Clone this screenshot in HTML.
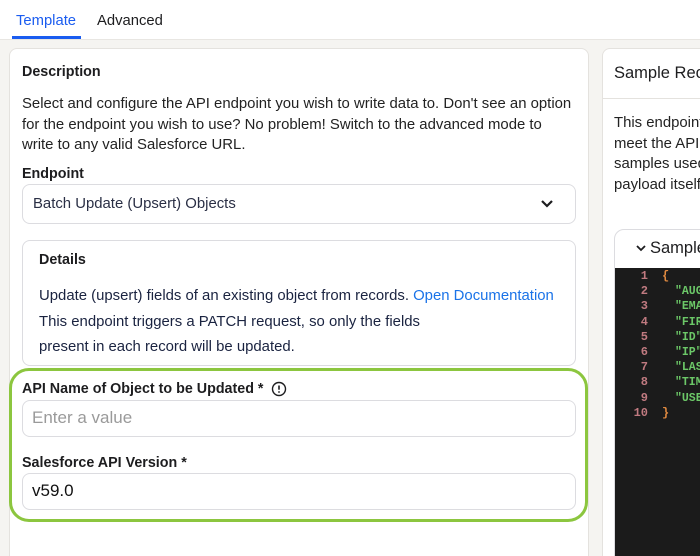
<!DOCTYPE html>
<html><head><style>
*{box-sizing:border-box;margin:0;padding:0}
html,body{width:700px;height:556px;overflow:hidden}
body{background:#f5f4f1;font-family:"Liberation Sans",sans-serif;color:#1d1d1f;position:relative}
.a{position:absolute;white-space:nowrap}
.tabs{position:absolute;left:0;top:0;width:700px;height:40px;background:#fff;border-bottom:1px solid #e8e6e2}
.card{position:absolute;background:#fff;border:1px solid #e4e2de;border-radius:8px}
.box{position:absolute;border:1px solid #dcdce0;border-radius:8px;background:#fff}
.t14{font-size:14.9px}
.b{font-weight:bold;font-size:14.3px}
#r{position:absolute;left:602px;top:48px;width:98px;height:508px;overflow:hidden}
</style></head><body>
<div class="tabs">
 <div class="a" style="left:16px;top:13px;font-size:14.8px;color:#1a5cf0">Template</div>
 <div class="a" style="left:12px;top:36px;width:69px;height:3px;background:#1a5cf0"></div>
 <div class="a" style="left:97px;top:13px;font-size:14.8px;color:#1d1d1f">Advanced</div>
</div>

<div class="card" style="left:9px;top:48px;width:580px;height:520px"></div>
<div class="a b" style="left:22px;top:64px">Description</div>
<div class="a t14" style="left:22px;top:94px;line-height:20.5px;color:#222">Select and configure the API endpoint you wish to write data to. Don't see an option<br>for the endpoint you wish to use? No problem! Switch to the advanced mode to<br>write to any valid Salesforce URL.</div>
<div class="a b" style="left:22px;top:166px">Endpoint</div>
<div class="box" style="left:22px;top:184px;width:554px;height:40px"></div>
<div class="a t14" style="left:33px;top:196px;color:#2a2f45">Batch Update (Upsert) Objects</div>
<svg class="a" style="left:540px;top:199px" width="14" height="10" viewBox="0 0 14 10"><path d="M2 2l5 5 5-5" fill="none" stroke="#1d1d1f" stroke-width="2.2"/></svg>

<div class="box" style="left:22px;top:240px;width:554px;height:126px"></div>
<div class="a b" style="left:39px;top:252px">Details</div>
<div class="a t14" style="left:39px;top:288px;color:#1a2340">Update (upsert) fields of an existing object from records. <span style="color:#1a73e8">Open Documentation</span></div>
<div class="a t14" style="left:39px;top:314px;color:#1a2340">This endpoint triggers a PATCH request, so only the fields</div>
<div class="a t14" style="left:39px;top:339px;color:#1a2340">present in each record will be updated.</div>

<div class="a" style="left:9px;top:368px;width:579px;height:154px;border:3px solid #8cc63f;border-radius:20px"></div>
<div class="a b" style="left:22px;top:381px">API Name of Object to be Updated *</div>
<svg class="a" style="left:271px;top:381px" width="16" height="16" viewBox="0 0 16 16"><circle cx="8" cy="8" r="6.5" fill="none" stroke="#1d1d1f" stroke-width="1.4"/><path d="M8 4.5v4.2" stroke="#1d1d1f" stroke-width="1.6"/><circle cx="8" cy="11" r="0.9" fill="#1d1d1f"/></svg>
<div class="box" style="left:22px;top:400px;width:554px;height:37px"></div>
<div class="a" style="left:32px;top:408px;font-size:17px;color:#9a9a9a">Enter a value</div>
<div class="a b" style="left:22px;top:455px">Salesforce API Version *</div>
<div class="box" style="left:22px;top:473px;width:554px;height:37px"></div>
<div class="a" style="left:32px;top:481px;font-size:17px;color:#111">v59.0</div>

<div id="r">
<div class="card" style="left:0;top:0;width:120px;height:520px"></div>
<div class="a" style="left:12px;top:16px;font-size:16.5px">Sample Records</div>
<div class="a" style="left:1px;top:50px;width:100px;height:1px;background:#e4e2de"></div>
<div class="a t14" style="left:12px;top:65px;line-height:20.5px;color:#222">This endpoint<br>meet the API<br>samples used<br>payload itself</div>
<div class="a" style="left:12px;top:181px;width:100px;height:340px;border:1px solid #dcdce0;border-radius:10px;background:#fff"></div>
<svg class="a" style="left:33px;top:196px" width="12" height="8" viewBox="0 0 12 8"><path d="M2 2l4 4 4-4" fill="none" stroke="#1d1d1f" stroke-width="1.8"/></svg>
<div class="a" style="left:48px;top:191px;font-size:16.5px">Sample</div>
<div class="a" style="left:13px;top:220px;width:90px;height:300px;background:#1b1b1b"></div>
<div class="a" style="left:26px;top:221px;font-family:'Liberation Mono',monospace;font-size:12px;font-weight:bold;line-height:15.2px;color:#c07a80;text-align:right;width:20px">1<br>2<br>3<br>4<br>5<br>6<br>7<br>8<br>9<br>10</div>
<div class="a" style="left:60px;top:221px;font-family:'Liberation Mono',monospace;font-size:12px;font-weight:bold;line-height:15.2px;color:#e08a40">{<br><br><br><br><br><br><br><br><br>}</div>
<div class="a" style="left:73px;top:221px;font-family:'Liberation Mono',monospace;font-size:11.5px;font-weight:bold;line-height:15.2px;color:#6cc868"><br>"AUG<br>"EMA<br>"FIR<br>"ID"<br>"IP"<br>"LAS<br>"TIM<br>"USE</div>
</div>
</body></html>
